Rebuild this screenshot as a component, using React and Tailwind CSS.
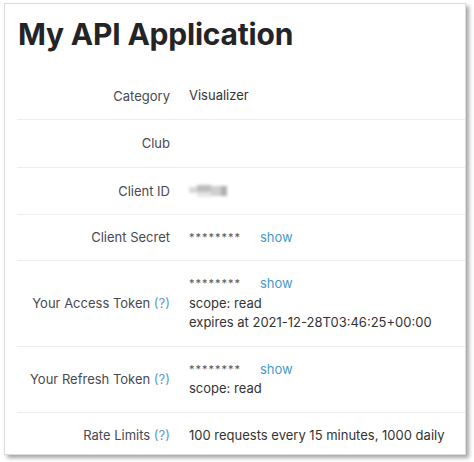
export default function App() {
  const font = { fontFamily: '"Inter", "Liberation Sans", Arial, sans-serif' };
  const Row = ({ label, help, children, last }) => (
    <div className={`ml-[12px] flex ${last ? "" : "border-b border-[#eeeeee]"}`}>
      <div className="w-[153px] shrink-0 flex items-center justify-end text-right text-[#494950]">
        <span>
          {label}
          {help && <span className="text-[#5a9bc8]"> (?)</span>}
        </span>
      </div>
      <div className="pl-[19px] py-[13px] text-[#333333] leading-[19.5px]">{children}</div>
    </div>
  );
  const Secret = () => (
    <div className="flex items-center">
      <span className="w-[71px] text-[11px] tracking-[1px] text-[#555]">********</span>
      <span className="text-[#4a97c9]">show</span>
    </div>
  );
  return (
    <div className="w-[474px] h-[462px] bg-white pt-[3px] pl-[4px]" style={font}>
      <div className="w-[462px] h-[452px] border border-[#dcdcdc] bg-white shadow-[3px_3px_4px_rgba(0,0,0,0.35)] text-[13px] leading-[20px]">
        <h1 className="pl-[13px] pt-[8px] pb-[16px] text-[30px] leading-[45px] font-bold text-[#242428] tracking-[-0.2px]">
          My API Application
        </h1>
        <Row label="Category">Visualizer</Row>
        <Row label="Club"><div className="h-[21px]" /></Row>
        <Row label="Client ID">
          <div className="h-[20px] flex items-center">
            <div className="relative w-[40px] h-[12px] blur-[1.5px]">
              <div className="absolute left-0 top-[2px] w-[8px] h-[6px] bg-[#d8d8d8]" />
              <div className="absolute left-[8px] top-0 w-[14px] h-[7px] bg-[#bdbdbd]" />
              <div className="absolute left-[8px] top-[7px] w-[14px] h-[5px] bg-[#e6e6e6]" />
              <div className="absolute left-[22px] top-[1px] w-[10px] h-[10px] bg-[#cfcfcf]" />
              <div className="absolute left-[32px] top-[1px] w-[6px] h-[10px] bg-[#b0b0b0]" />
            </div>
          </div>
        </Row>
        <Row label="Client Secret"><Secret /></Row>
        <Row label="Your Access Token" help>
          <Secret />
          <div>scope: read</div>
          <div>expires at 2021-12-28T03:46:25+00:00</div>
        </Row>
        <Row label="Your Refresh Token" help>
          <Secret />
          <div>scope: read</div>
        </Row>
        <Row label="Rate Limits" help last>100 requests every 15 minutes, 1000 daily</Row>
      </div>
    </div>
  );
}
